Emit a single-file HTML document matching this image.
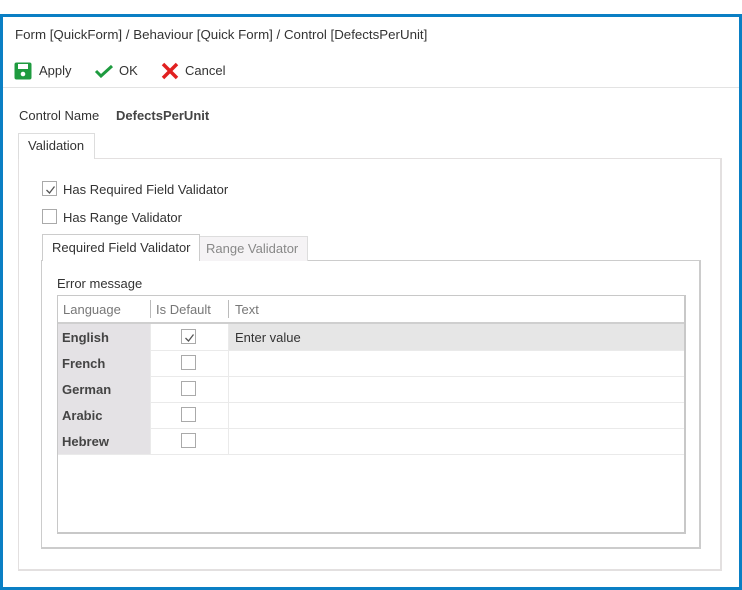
<!DOCTYPE html>
<html><head><meta charset="utf-8"><style>
*{margin:0;padding:0;box-sizing:border-box}
body{width:742px;height:590px;background:#fff;position:relative;overflow:hidden;font-family:"Liberation Sans",sans-serif;font-size:13px;color:#333}
.a{position:absolute;white-space:nowrap}
.frame{position:absolute;left:0;top:14px;width:742px;height:576px;border:3px solid #0a7fc4;border-top-width:3px}
.cb{position:absolute;width:15px;height:15px;border:1px solid #aaa;background:#fff}
.cb svg{position:absolute;left:2px;top:2px}
.b{font-weight:bold;color:#444}
</style></head><body>
<div class="frame"></div>
<div class="a" style="left:15px;top:27px;font-size:13.3px">Form [QuickForm] / Behaviour [Quick Form] / Control [DefectsPerUnit]</div>
<svg class="a" style="left:14px;top:62px" width="19" height="18" viewBox="0 0 19 18"><rect x="0.5" y="0.5" width="17" height="17" rx="2" fill="#1e9b3f"/><rect x="4" y="2" width="10" height="5" fill="#fff"/><circle cx="9" cy="12" r="2.3" fill="#fff"/></svg>
<div class="a" style="left:39px;top:63px">Apply</div>
<svg class="a" style="left:94px;top:64px" width="20" height="14" viewBox="0 0 20 14"><path d="M2 7 L7 12 L18 2" stroke="#1e9b3f" stroke-width="3" fill="none"/></svg>
<div class="a" style="left:119px;top:63px">OK</div>
<svg class="a" style="left:161px;top:62px" width="18" height="18" viewBox="0 0 18 18"><path d="M2 2 L16 16 M16 2 L2 16" stroke="#e12020" stroke-width="3.5"/></svg>
<div class="a" style="left:185px;top:63px">Cancel</div>
<div class="a" style="left:3px;top:87px;width:736px;height:1px;background:#e3e3e3"></div>
<div class="a" style="left:19px;top:108px">Control Name</div>
<div class="a b" style="left:116px;top:108px;font-size:13px">DefectsPerUnit</div>
<div class="a" style="left:18px;top:158px;width:704px;height:413px;border:1px solid #e3e0e0;border-right-width:2px;border-bottom-width:2px"></div>
<div class="a" style="left:18px;top:133px;width:77px;height:26px;border:1px solid #ddd;border-bottom:none;background:#fff;padding:4px 0 0 9px">Validation</div>
<div class="cb" style="left:42px;top:181px"><svg width="11" height="11"><path d="M1.5 6 L4.5 9 L9.5 2.5" stroke="#555" stroke-width="1.3" fill="none"/></svg></div>
<div class="a" style="left:63px;top:182px">Has Required Field Validator</div>
<div class="cb" style="left:42px;top:209px"></div>
<div class="a" style="left:63px;top:210px">Has Range Validator</div>
<div class="a" style="left:41px;top:260px;width:660px;height:289px;border:1px solid #ccc;border-right-width:2px;border-bottom-width:2px"></div>
<div class="a" style="left:199px;top:236px;width:109px;height:25px;border:1px solid #ddd;border-bottom:none;background:#f5f3f5;color:#888;padding:4px 0 0 6px">Range Validator</div>
<div class="a" style="left:42px;top:234px;width:158px;height:27px;border:1px solid #ccc;border-bottom:none;background:#fff;padding:5px 0 0 9px">Required Field Validator</div>
<div class="a" style="left:57px;top:276px">Error message</div>
<div class="a" style="left:57px;top:295px;width:629px;height:239px;border:1px solid #c8c8c8;border-right-width:2px;border-bottom-width:2px"></div>
<div class="a" style="left:58px;top:322px;width:626px;height:2px;background:#cfcfcf"></div>
<div class="a" style="left:58px;top:324px;width:92px;height:130px;background:#e4e2e5"></div>
<div class="a" style="left:229px;top:324px;width:455px;height:26px;background:#e6e6e6"></div>
<div class="a" style="left:150px;top:324px;width:1px;height:130px;background:#eaeaea"></div>
<div class="a" style="left:228px;top:324px;width:1px;height:130px;background:#eaeaea"></div>
<div class="a" style="left:150px;top:300px;width:1px;height:18px;background:#bbb"></div>
<div class="a" style="left:228px;top:300px;width:1px;height:18px;background:#bbb"></div>
<div class="a" style="left:150px;top:350px;width:534px;height:1px;background:#eaeaea"></div>
<div class="a" style="left:150px;top:376px;width:534px;height:1px;background:#eaeaea"></div>
<div class="a" style="left:150px;top:402px;width:534px;height:1px;background:#eaeaea"></div>
<div class="a" style="left:150px;top:428px;width:534px;height:1px;background:#eaeaea"></div>
<div class="a" style="left:58px;top:454px;width:626px;height:1px;background:#eaeaea"></div>
<div class="a" style="left:63px;top:302px;color:#777">Language</div>
<div class="a" style="left:156px;top:302px;color:#777">Is Default</div>
<div class="a" style="left:235px;top:302px;color:#777">Text</div>
<div class="a b" style="left:62px;top:330px">English</div>
<div class="a b" style="left:62px;top:356px">French</div>
<div class="a b" style="left:62px;top:382px">German</div>
<div class="a b" style="left:62px;top:408px">Arabic</div>
<div class="a b" style="left:62px;top:434px">Hebrew</div>
<div class="a" style="left:235px;top:330px">Enter value</div>
<div class="cb" style="left:181px;top:329px"><svg width="11" height="11"><path d="M1.5 6 L4.5 9 L9.5 2.5" stroke="#555" stroke-width="1.3" fill="none"/></svg></div>
<div class="cb" style="left:181px;top:355px"></div>
<div class="cb" style="left:181px;top:381px"></div>
<div class="cb" style="left:181px;top:407px"></div>
<div class="cb" style="left:181px;top:433px"></div>
</body></html>
